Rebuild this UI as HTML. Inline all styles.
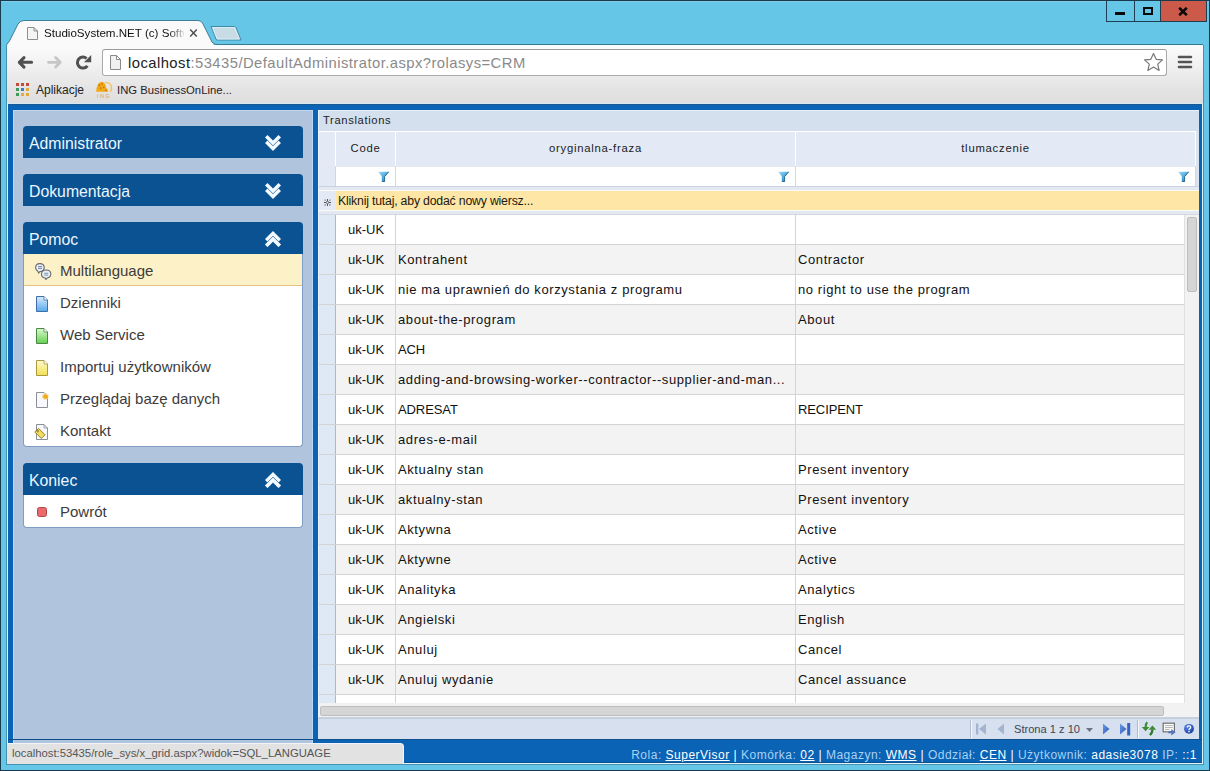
<!DOCTYPE html>
<html><head><meta charset="utf-8">
<style>
*{box-sizing:border-box;margin:0;padding:0}
html,body{width:1210px;height:771px;overflow:hidden;background:#66c6e8;font-family:"Liberation Sans",sans-serif}
.a{position:absolute}
#outline{left:0;top:0;width:1210px;height:771px;border:1px solid #173a4c;border-top-width:1px}
/* window buttons */
#wbtn{left:1106px;top:1px;width:101px;height:21px;border:1px solid #1e3f52;border-top:0;background:#66c6e8}
#wmin{left:0;top:0;width:28px;height:20px;border-right:1px solid #1e3f52}
#wmax{left:28px;top:0;width:26px;height:20px;border-right:1px solid #1e3f52}
#wcls{left:54px;top:0;width:45px;height:20px;background:#cb5a4a}
/* tabs */
#tabstripline{left:7px;top:44px;width:1196px;height:1px;background:#37798f}
#toolbar{left:7px;top:45px;width:1196px;height:59px;background:linear-gradient(#effcff 0,#fafafa 2px,#f1f1f1 20px,#e3e3e3 45px,#dedede 59px)}
#omni{left:102px;top:49px;width:1065px;height:27px;background:#fff;border:1px solid #a9a9a9;border-radius:3px;border-top-color:#9a9a9a}
#url{left:128px;top:53px;font-size:14.8px;letter-spacing:0.45px;line-height:20px;color:#8a8a8a;white-space:pre}
#url b{font-weight:normal;color:#222}
.bm{font-size:12px;color:#222;white-space:pre;line-height:14px}
#page{left:8px;top:104px;width:1194px;height:659px;background:#0a63b5}
#leftp{left:13px;top:110px;width:300px;height:640px;background:#b0c4de;border-left:1px solid #c4d8f2;border-top:1px solid #c0d6f0;border-right:1px solid #bcd6f6}
.hdr{position:absolute;left:23px;width:280px;height:32px;background:#0a5292;border-radius:4px 4px 0 0;color:#eaf7ff;font-size:15.8px;line-height:32px;padding-top:2px;padding-left:6px}
.hdr.c{}
.chev{position:absolute;left:241px;top:8px}
.plist{position:absolute;left:23px;width:280px;background:#fff;border:1px solid #7f9dc4;border-top:0;border-radius:0 0 4px 4px}
.item{position:relative;height:32px;font-size:15px;color:#3c3c3c;line-height:32px;padding-top:1px;padding-left:36px;white-space:pre}
.item.sel{background:#fdf1c8;border-bottom:1px solid #e6c27a;height:32px}
.ico{position:absolute;left:12px;top:8px}
#rightp{left:318px;top:110px;width:881px;height:629px;background:#dae3f0}
#ttl{left:318px;top:110px;width:881px;height:21px;background:#d5e0ef;border-top:1px solid #e8f0fb;border-left:1px solid #eef4fc;font-size:11.2px;letter-spacing:0.65px;color:#222;line-height:18px;padding-left:4px}
.hc{position:absolute;top:131px;height:35px;background:#e3eaf6;border-right:1px solid #fff;border-top:1px solid #fff;font-size:11.3px;letter-spacing:0.75px;color:#222;text-align:center;line-height:33px}
.fc{position:absolute;top:166px;height:20px;background:#fff;border-right:1px solid #d0d7e2;border-top:1px solid #e3e8f0}
.row{position:absolute;left:319px;width:865px;height:30px;border-bottom:1px solid #d4d4d4}
.row.g{background:#f3f3f3}
.row.w{background:#fff}
.ri{position:absolute;left:0;top:0;width:17px;height:29px;background:#dfe8f5;border-right:1px solid #a9b9cf}
.cc{position:absolute;left:17px;top:0;width:60px;height:29px;border-right:1px solid #d4d4d4;text-align:center;font-size:13px;letter-spacing:0px;padding-left:1px;color:#111;line-height:29px;white-space:pre}
.oc{position:absolute;left:77px;top:0;width:400px;height:29px;border-right:1px solid #d4d4d4;font-size:13px;letter-spacing:0.6px;color:#111;line-height:29px;padding-left:2px;white-space:pre}
.tc{position:absolute;left:477px;top:0;width:388px;height:29px;font-size:13px;letter-spacing:0.6px;color:#111;line-height:29px;padding-left:2px;white-space:pre}
#status{left:560px;top:747px;width:637px;text-align:right;font-size:12px;letter-spacing:0.5px;color:#a9d2f3;white-space:pre;line-height:16px}
#status u{color:#fff}
#bubble{left:7px;top:743px;width:397px;height:21px;background:#e2e2e2;border-top:1px solid #f0f4f8;border-right:1px solid #f0f4f8;border-radius:0 4px 0 0;font-size:11.3px;color:#555;line-height:19px;padding-left:5px;white-space:pre}
</style></head><body>
<div class="a" id="outline"></div>
<div class="a" style="left:1px;top:1px;width:1208px;height:1px;background:#84cce6"></div>

<!-- window buttons -->
<div class="a" id="wbtn">
 <div class="a" id="wmin"><div class="a" style="left:8px;top:11px;width:10px;height:3px;background:#0a0a0a"></div></div>
 <div class="a" id="wmax"><div class="a" style="left:8px;top:6px;width:10px;height:8px;border:2px solid #0a0a0a"></div></div>
 <div class="a" id="wcls"><svg class="a" style="left:17px;top:6px" width="10" height="9" viewBox="0 0 10 9"><path d="M1.2 0.8L8.8 8.2M8.8 0.8L1.2 8.2" stroke="#0a0a0a" stroke-width="2.6"/></svg></div>
</div>

<div class="a" id="tabstripline"></div>
<!-- new tab button -->
<svg class="a" style="left:208px;top:24px" width="40" height="20" viewBox="0 0 40 20"><path d="M3 2.5H26.5Q27.5 2.5 28 3.5L33 16H8.5Z" fill="#c8dce6" stroke="#3f8aa6" stroke-width="1"/><path d="M4.6 3.5H26.3L31.4 15H9.2Z" fill="none" stroke="#e0f2fa" stroke-width="0.8"/></svg>
<div class="a" id="toolbar"></div>
<!-- active tab -->
<svg class="a" style="left:0;top:18px" width="230" height="28" viewBox="0 0 230 28"><path d="M7 27.5 L7 26 Q9 24 10 22 L18 6 Q20 2.5 24 2.5 L198 2.5 Q201 2.5 202.5 5 L212 24 Q214 26.5 217 26.5" fill="#fafafa" stroke="#3d7f98" stroke-width="1"/><rect x="7.5" y="26" width="206" height="3" fill="#fafafa"/></svg>
<svg class="a" style="left:26px;top:26px" width="13" height="15" viewBox="0 0 13 15"><path d="M1.5 1.5H8L11.5 5V13.5H1.5Z" fill="#f4f4f4" stroke="#8e8e8e"/><path d="M8 1.5V5H11.5" fill="none" stroke="#8e8e8e"/></svg>
<div class="a" style="left:44px;top:26px;font-size:11.6px;color:#111;white-space:pre;line-height:14px;width:140px;overflow:hidden;-webkit-mask-image:linear-gradient(90deg,#000 124px,rgba(0,0,0,.25) 138px,transparent 142px)">StudioSystem.NET (c) Software</div>
<svg class="a" style="left:189px;top:28px" width="9" height="10" viewBox="0 0 9 10"><path d="M1.2 1.5L7.8 8.5M7.8 1.5L1.2 8.5" stroke="#505050" stroke-width="1.5"/></svg>

<!-- nav buttons -->
<svg class="a" style="left:17px;top:55px" width="17" height="15" viewBox="0 0 17 15"><path d="M7 2.6L2.3 7.35L7 12.1M2.6 7.35H14.6" fill="none" stroke="#505050" stroke-width="3" stroke-linecap="round" stroke-linejoin="round"/></svg>
<svg class="a" style="left:46px;top:55px" width="17" height="15" viewBox="0 0 17 15"><path d="M9.6 2.6L14.3 7.35L9.6 12.1M14 7.35H2.4" fill="none" stroke="#c6c6c6" stroke-width="2.8" stroke-linecap="round" stroke-linejoin="round"/></svg>
<svg class="a" style="left:75px;top:54px" width="17" height="17" viewBox="0 0 17 17"><path d="M12.4 11.8A5.5 5.5 0 1 1 11.6 4.5" fill="none" stroke="#505050" stroke-width="3"/><path d="M16.2 1V8.2H9Z" fill="#505050"/></svg>

<div class="a" id="omni"></div>
<svg class="a" style="left:109px;top:54px" width="13" height="17" viewBox="0 0 13 17"><path d="M1.5 1.5H7.5L11.5 5.5V15.5H1.5Z" fill="#f0f0f0" stroke="#8a8a8a"/><path d="M7.5 1.5V5.5H11.5Z" fill="#fff" stroke="#8a8a8a" stroke-linejoin="round"/></svg>
<div class="a" id="url"><b>localhost</b>:53435/DefaultAdministrator.aspx?rolasys=CRM</div>
<svg class="a" style="left:1143px;top:52px" width="21" height="20" viewBox="0 0 21 20"><path d="M10.5 1.5L13.2 7.3L19.5 7.9L14.7 12.1L16.1 18.4L10.5 15.1L4.9 18.4L6.3 12.1L1.5 7.9L7.8 7.3Z" fill="#fff" stroke="#777" stroke-width="1.2" stroke-linejoin="round"/></svg>
<svg class="a" style="left:1177px;top:54px" width="16" height="16" viewBox="0 0 16 16"><path d="M2 3H14M2 8H14M2 13H14" stroke="#555" stroke-width="2.6" stroke-linecap="round"/></svg>

<!-- bookmarks -->
<svg class="a" style="left:15px;top:82px" width="15" height="15" viewBox="0 0 15 15">
<rect x="1" y="1" width="3" height="3" fill="#c9483c"/><rect x="6" y="1" width="3" height="3" fill="#c9483c"/><rect x="11" y="1" width="3" height="3" fill="#c9483c"/>
<rect x="1" y="6" width="3" height="3" fill="#3c9a5a"/><rect x="6" y="6" width="3" height="3" fill="#3b7fc8"/><rect x="11" y="6" width="3" height="3" fill="#e2aa3c"/>
<rect x="1" y="11" width="3" height="3" fill="#3c9a5a"/><rect x="6" y="11" width="3" height="3" fill="#e2aa3c"/><rect x="11" y="11" width="3" height="3" fill="#e2aa3c"/></svg>
<div class="a bm" style="left:36px;top:83px">Aplikacje</div>
<svg class="a" style="left:95px;top:80px" width="18" height="18" viewBox="0 0 18 18"><path d="M1.2 11.8Q0.8 8 2.4 6Q3 3 5.6 2Q8.2 1.2 9.8 3.4Q11.2 5.2 10.8 7.4Q12.8 8.6 13.2 11.8Z" fill="#f3a818"/><path d="M10.2 2.4Q14.8 2.2 16.2 6Q17.2 9.6 15.2 11.8" fill="none" stroke="#f6c060" stroke-width="1.4"/><circle cx="4.2" cy="5.2" r="0.9" fill="#b87000"/><circle cx="7" cy="4" r="0.8" fill="#b87000"/><circle cx="5.6" cy="8.2" r="0.9" fill="#c47c00"/><circle cx="8.8" cy="7.4" r="0.8" fill="#c47c00"/><circle cx="11" cy="10.4" r="0.8" fill="#c47c00"/><text x="9" y="17.6" font-size="5.6" fill="#e0a050" text-anchor="middle" letter-spacing="1.3" font-family="Liberation Sans">ING</text></svg>
<div class="a bm" style="left:117px;top:83px;font-size:11.3px;color:#2a1a2a">ING BusinessOnLine...</div>

<!-- page -->
<div class="a" id="page"></div>
<div class="a" style="left:6px;top:45px;width:1px;height:720px;background:#4593b3"></div>
<div class="a" style="left:1203px;top:45px;width:1px;height:720px;background:#4593b3"></div>
<div class="a" style="left:6px;top:764px;width:1198px;height:1px;background:#4593b3"></div>
<div class="a" style="left:7px;top:103px;width:1196px;height:1px;background:#d6e6f0"></div>
<div class="a" style="left:8px;top:104px;width:1194px;height:1px;background:#1a5892"></div>
<div class="a" style="left:7px;top:103px;width:1px;height:661px;background:#dff3fb"></div>
<div class="a" style="left:1202px;top:103px;width:1px;height:661px;background:#dff3fb"></div>
<div class="a" style="left:7px;top:763px;width:1196px;height:1px;background:#dff3fb"></div>
<div class="a" id="leftp"></div>

<div class="hdr c" style="top:126px">Administrator<svg class="chev" width="18" height="18" viewBox="-1 -1 18 18"><path d="M0 2.5L2.5 0L8 5.5L13.5 0L16 2.5L8 10.5Z" fill="#f2faff"/><path d="M0 8L2.5 5.5L8 11L13.5 5.5L16 8L8 16Z" fill="#f2faff" stroke="#0a4a84" stroke-width="1"/><path d="M0 8L2.5 5.5L8 11L13.5 5.5L16 8L8 16Z" fill="#f2faff"/></svg></div>
<div class="hdr c" style="top:174px">Dokumentacja<svg class="chev" width="18" height="18" viewBox="-1 -1 18 18"><path d="M0 2.5L2.5 0L8 5.5L13.5 0L16 2.5L8 10.5Z" fill="#f2faff"/><path d="M0 8L2.5 5.5L8 11L13.5 5.5L16 8L8 16Z" fill="#f2faff" stroke="#0a4a84" stroke-width="1"/><path d="M0 8L2.5 5.5L8 11L13.5 5.5L16 8L8 16Z" fill="#f2faff"/></svg></div>
<div class="hdr" style="top:222px">Pomoc<svg class="chev" width="18" height="18" viewBox="-1 -1 18 18"><path d="M0 8L8 0L16 8L13.5 10.5L8 5L2.5 10.5Z" fill="#f2faff"/><path d="M0 13.5L8 5.5L16 13.5L13.5 16L8 10.5L2.5 16Z" fill="#f2faff" stroke="#0a4a84" stroke-width="1"/><path d="M0 13.5L8 5.5L16 13.5L13.5 16L8 10.5L2.5 16Z" fill="#f2faff"/></svg></div>
<div class="plist" style="top:254px;height:193px">
 <div class="item sel">Multilanguage<svg class="ico" style="left:11px;top:8px" width="17" height="18" viewBox="0 0 17 18"><path d="M3 9.5Q0.6 8 0.6 5.6Q0.6 1.6 4.8 1.6Q9.2 1.6 9.2 5.6Q9.2 9.4 5 9.6L3.6 11Z" fill="#e8eef8" stroke="#6a6a6a" stroke-width="1.1"/><path d="M3 4.6H7M3 6.4H7" stroke="#7a82a8" stroke-width="1"/><path d="M10.5 16.2Q6.5 15.8 6.5 12.3Q6.5 8 11.2 8Q15.8 8 15.8 12Q15.8 15.4 12.2 16L11 17.6Z" fill="#e8eef8" stroke="#6a6a6a" stroke-width="1.1"/><path d="M9.2 11.3H13.2M9.2 13.1H13.2" stroke="#7a9aa8" stroke-width="1"/></svg></div>
 <div class="item">Dzienniki<svg class="ico" style="left:12px;top:10px" width="13" height="17" viewBox="0 0 13 17"><defs><linearGradient id="gb" x1="0" y1="0" x2="0" y2="1"><stop offset="0" stop-color="#d8ecfc"/><stop offset="1" stop-color="#58a8ec"/></linearGradient></defs><path d="M0.5 0.5H8L11.5 4V15.5H0.5Z" fill="url(#gb)" stroke="#3d6fa8"/><path d="M8 0.5V4H11.5" fill="#fff" stroke="#3d6fa8" stroke-width="0.8"/></svg></div>
 <div class="item">Web Service<svg class="ico" style="left:12px;top:10px" width="13" height="17" viewBox="0 0 13 17"><defs><linearGradient id="gg" x1="0" y1="0" x2="0" y2="1"><stop offset="0" stop-color="#dcf8d0"/><stop offset="1" stop-color="#62d050"/></linearGradient></defs><path d="M0.5 0.5H8L11.5 4V15.5H0.5Z" fill="url(#gg)" stroke="#4a8a44"/><path d="M8 0.5V4H11.5" fill="#fff" stroke="#4a8a44" stroke-width="0.8"/></svg></div>
 <div class="item">Importuj użytkowników<svg class="ico" style="left:12px;top:10px" width="13" height="17" viewBox="0 0 13 17"><defs><linearGradient id="gy" x1="0" y1="0" x2="0" y2="1"><stop offset="0" stop-color="#fffad0"/><stop offset="1" stop-color="#f2e050"/></linearGradient></defs><path d="M0.5 0.5H8L11.5 4V15.5H0.5Z" fill="url(#gy)" stroke="#a89a40"/><path d="M8 0.5V4H11.5" fill="#fff" stroke="#a89a40" stroke-width="0.8"/></svg></div>
 <div class="item">Przeglądaj bazę danych<svg class="ico" style="left:12px;top:10px" width="14" height="17" viewBox="0 0 14 17"><path d="M0.5 0.5H8L11.5 4V15.5H0.5Z" fill="#f8f9fc" stroke="#8a8f9a"/><circle cx="9.3" cy="4.6" r="3.4" fill="#fbd27a" opacity="0.6"/><circle cx="9.3" cy="4.6" r="2.2" fill="#f2a620"/></svg></div>
 <div class="item">Kontakt<svg class="ico" style="left:10px;top:10px" width="16" height="17" viewBox="0 0 16 17"><path d="M2.5 0.5H10L13.5 4V15.5H2.5Z" fill="#f8f9fc" stroke="#8a8f9a"/><path d="M10 0.5V4H13.5" fill="none" stroke="#8a8f9a" stroke-width="0.8"/><path d="M0.8 8L4.5 4.3L11 10.8L7.3 14.5Z" fill="#f2dc60" stroke="#8c7a20" stroke-width="0.9"/><circle cx="3.6" cy="7" r="0.9" fill="none" stroke="#6a5a10" stroke-width="0.7"/></svg></div>
</div>
<div class="hdr" style="top:463px">Koniec<svg class="chev" width="18" height="18" viewBox="-1 -1 18 18"><path d="M0 8L8 0L16 8L13.5 10.5L8 5L2.5 10.5Z" fill="#f2faff"/><path d="M0 13.5L8 5.5L16 13.5L13.5 16L8 10.5L2.5 16Z" fill="#f2faff" stroke="#0a4a84" stroke-width="1"/><path d="M0 13.5L8 5.5L16 13.5L13.5 16L8 10.5L2.5 16Z" fill="#f2faff"/></svg></div>
<div class="plist" style="top:495px;height:33px">
 <div class="item">Powrót<svg class="ico" style="left:13px;top:12px" width="10" height="10" viewBox="0 0 10 10"><rect x="0.5" y="0.5" width="9" height="9" rx="2" fill="#e86a6a" stroke="#b04848"/></svg></div>
</div>

<!-- right panel -->
<div class="a" id="rightp"></div>
<div class="a" id="ttl">Translations</div>
<div class="a" style="left:318px;top:131px;width:1px;height:607px;background:#eef3fa"></div>
<div class="hc" style="left:319px;width:17px"></div>
<div class="hc" style="left:336px;width:60px">Code</div>
<div class="hc" style="left:396px;width:400px">oryginalna-fraza</div>
<div class="hc" style="left:796px;width:400px">tlumaczenie</div>
<div class="fc" style="left:319px;width:17px;background:#e3eaf6"></div>
<div class="fc" style="left:336px;width:60px"><svg class="a" style="left:42px;top:4px" width="12" height="11" viewBox="0 0 12 11"><defs><linearGradient id="fn1" x1="0" y1="0" x2="1" y2="1"><stop offset="0" stop-color="#a8dcf4"/><stop offset="0.6" stop-color="#3ea4d8"/><stop offset="1" stop-color="#1e6a96"/></linearGradient></defs><path d="M0.2 0.8H10.8L6.6 5.6V10.6H3.8V5.6Z" fill="url(#fn1)"/><path d="M10.8 0.8L6.6 5.6V10.6H3.8" fill="none" stroke="#1d5c82" stroke-width="0.9"/></svg></div>
<div class="fc" style="left:396px;width:400px"><svg class="a" style="left:382px;top:4px" width="12" height="11" viewBox="0 0 12 11"><defs><linearGradient id="fn2" x1="0" y1="0" x2="1" y2="1"><stop offset="0" stop-color="#a8dcf4"/><stop offset="0.6" stop-color="#3ea4d8"/><stop offset="1" stop-color="#1e6a96"/></linearGradient></defs><path d="M0.2 0.8H10.8L6.6 5.6V10.6H3.8V5.6Z" fill="url(#fn2)"/><path d="M10.8 0.8L6.6 5.6V10.6H3.8" fill="none" stroke="#1d5c82" stroke-width="0.9"/></svg></div>
<div class="fc" style="left:796px;width:400px"><svg class="a" style="left:382px;top:4px" width="12" height="11" viewBox="0 0 12 11"><defs><linearGradient id="fn3" x1="0" y1="0" x2="1" y2="1"><stop offset="0" stop-color="#a8dcf4"/><stop offset="0.6" stop-color="#3ea4d8"/><stop offset="1" stop-color="#1e6a96"/></linearGradient></defs><path d="M0.2 0.8H10.8L6.6 5.6V10.6H3.8V5.6Z" fill="url(#fn3)"/><path d="M10.8 0.8L6.6 5.6V10.6H3.8" fill="none" stroke="#1d5c82" stroke-width="0.9"/></svg></div>
<div class="a" style="left:319px;top:186px;width:880px;height:4px;background:#e4e9f1;border-top:1px solid #c9d2de"></div>
<div class="a" style="left:319px;top:190px;width:880px;height:21px;background:#fde6a6;border-top:1px solid #fbfbf6;border-bottom:1px solid #fbfbf6;font-size:12.3px;letter-spacing:-0.2px;color:#1e1a10;line-height:21px;padding-left:19px;white-space:pre">Kliknij tutaj, aby dodać nowy wiersz...</div>
<div class="a" style="left:319px;top:191px;width:17px;height:19px;background:#e3eaf6"><svg class="a" style="left:5px;top:8px" width="7" height="7" viewBox="0 0 7 7"><circle cx="3.5" cy="3.5" r="1.2" fill="none" stroke="#555" stroke-width="0.9"/><path d="M3.5 0V2M3.5 5V7M0 3.5H2M5 3.5H7" stroke="#555" stroke-width="1"/><circle cx="1.1" cy="1.1" r="0.65" fill="#444"/><circle cx="5.9" cy="1.1" r="0.65" fill="#444"/><circle cx="1.1" cy="5.9" r="0.65" fill="#444"/><circle cx="5.9" cy="5.9" r="0.65" fill="#444"/></svg></div>
<div class="a" style="left:319px;top:211px;width:880px;height:4px;background:#e4e9f1;border-bottom:1px solid #d0d8e4"></div>

<div id="rows">
<div class="row w" style="top:215px;height:30px;"><div class="ri"></div><div class="cc">uk-UK</div><div class="oc"></div><div class="tc"></div></div>
<div class="row g" style="top:245px;height:30px;"><div class="ri"></div><div class="cc">uk-UK</div><div class="oc">Kontrahent</div><div class="tc">Contractor</div></div>
<div class="row w" style="top:275px;height:30px;"><div class="ri"></div><div class="cc">uk-UK</div><div class="oc">nie ma uprawnień do korzystania z programu</div><div class="tc">no right to use the program</div></div>
<div class="row g" style="top:305px;height:30px;"><div class="ri"></div><div class="cc">uk-UK</div><div class="oc">about-the-program</div><div class="tc">About</div></div>
<div class="row w" style="top:335px;height:30px;"><div class="ri"></div><div class="cc">uk-UK</div><div class="oc" style="letter-spacing:-0.1px">ACH</div><div class="tc"></div></div>
<div class="row g" style="top:365px;height:30px;"><div class="ri"></div><div class="cc">uk-UK</div><div class="oc">adding-and-browsing-worker--contractor--supplier-and-man...</div><div class="tc"></div></div>
<div class="row w" style="top:395px;height:30px;"><div class="ri"></div><div class="cc">uk-UK</div><div class="oc" style="letter-spacing:-0.1px">ADRESAT</div><div class="tc" style="letter-spacing:-0.1px">RECIPENT</div></div>
<div class="row g" style="top:425px;height:30px;"><div class="ri"></div><div class="cc">uk-UK</div><div class="oc">adres-e-mail</div><div class="tc"></div></div>
<div class="row w" style="top:455px;height:30px;"><div class="ri"></div><div class="cc">uk-UK</div><div class="oc">Aktualny stan</div><div class="tc">Present inventory</div></div>
<div class="row g" style="top:485px;height:30px;"><div class="ri"></div><div class="cc">uk-UK</div><div class="oc">aktualny-stan</div><div class="tc">Present inventory</div></div>
<div class="row w" style="top:515px;height:30px;"><div class="ri"></div><div class="cc">uk-UK</div><div class="oc">Aktywna</div><div class="tc">Active</div></div>
<div class="row g" style="top:545px;height:30px;"><div class="ri"></div><div class="cc">uk-UK</div><div class="oc">Aktywne</div><div class="tc">Active</div></div>
<div class="row w" style="top:575px;height:30px;"><div class="ri"></div><div class="cc">uk-UK</div><div class="oc">Analityka</div><div class="tc">Analytics</div></div>
<div class="row g" style="top:605px;height:30px;"><div class="ri"></div><div class="cc">uk-UK</div><div class="oc">Angielski</div><div class="tc">English</div></div>
<div class="row w" style="top:635px;height:30px;"><div class="ri"></div><div class="cc">uk-UK</div><div class="oc">Anuluj</div><div class="tc">Cancel</div></div>
<div class="row g" style="top:665px;height:30px;"><div class="ri"></div><div class="cc">uk-UK</div><div class="oc">Anuluj wydanie</div><div class="tc">Cancel assuance</div></div>
<div class="row w" style="top:695px;height:8px;border-bottom:0;"><div class="ri"></div><div class="cc"></div><div class="oc"></div><div class="tc"></div></div>
</div>

<!-- vertical scrollbar -->
<div class="a" style="left:1184px;top:215px;width:15px;height:488px;background:#f2f2f2;border-left:1px solid #e0e0e0"></div>
<div class="a" style="left:1187px;top:217px;width:10px;height:75px;background:#d5d5d5;border:1px solid #bdbdbd;border-radius:2px"></div>
<!-- horizontal scrollbar -->
<div class="a" style="left:319px;top:703px;width:880px;height:15px;background:#f2f2f2;border-bottom:1px solid #c8d0dc"></div>
<div class="a" style="left:320px;top:706px;width:844px;height:10px;background:#d5d5d5;border:1px solid #bdbdbd;border-radius:2px"></div>

<!-- pager -->
<div class="a" style="left:318px;top:718px;width:881px;height:21px;background:#d7e0ee;border-top:1px solid #c3cedd"></div>
<div class="a" style="left:970px;top:720px;width:2px;height:18px;border-left:1px solid #aebbd0;border-right:1px solid #f4f8fd"></div>
<svg class="a" style="left:975px;top:722px" width="12" height="13" viewBox="0 0 12 13"><rect x="1" y="1.5" width="2.3" height="11" fill="#a4b4d0"/><path d="M11 1.5V12.5L4 7Z" fill="#a4b4d0"/></svg>
<svg class="a" style="left:996px;top:722px" width="9" height="13" viewBox="0 0 9 13"><path d="M8 1.5V12.5L1.5 7Z" fill="#a4b4d0"/></svg>
<div class="a" style="left:1014px;top:722px;font-size:11.1px;line-height:14px;color:#3b4656;white-space:pre">Strona 1 z 10</div>
<svg class="a" style="left:1085px;top:727px" width="9" height="6" viewBox="0 0 9 6"><path d="M1 1H8L4.5 5Z" fill="#6a7482"/></svg>
<svg class="a" style="left:1102px;top:722px" width="9" height="13" viewBox="0 0 9 13"><defs><linearGradient id="pb" x1="0" y1="0" x2="1" y2="1"><stop offset="0" stop-color="#6a9ae6"/><stop offset="1" stop-color="#2a58b8"/></linearGradient></defs><path d="M1 1.5V12.5L7.5 7Z" fill="url(#pb)"/></svg>
<svg class="a" style="left:1119px;top:722px" width="13" height="14" viewBox="0 0 13 14"><path d="M1 1.5V12.5L7.5 7Z" fill="url(#pb)"/><rect x="8.2" y="1" width="3" height="12.5" fill="#3462c0"/></svg>
<div class="a" style="left:1137px;top:720px;width:2px;height:18px;border-left:1px solid #aebbd0;border-right:1px solid #f4f8fd"></div>
<svg class="a" style="left:1141px;top:721px" width="16" height="15" viewBox="0 0 16 15"><path d="M6.2 1.2Q4.6 3 4.6 6.2" fill="none" stroke="#3e8a34" stroke-width="2.2"/><path d="M0.8 6H8.4L4.6 10.2Z" fill="#3e8a34"/><path d="M11.4 8.4Q11.4 12 8.8 14" fill="none" stroke="#2f7a28" stroke-width="2.2"/><path d="M7.6 8.8H15.2L11.4 4.6Z" fill="#3e8a34"/></svg>
<svg class="a" style="left:1162px;top:722px" width="15" height="14" viewBox="0 0 15 14"><rect x="1.2" y="1.2" width="11.2" height="8.6" fill="#fff" stroke="#6e6e6e" stroke-width="1.2"/><path d="M3 3.6H10.8M3 5.6H10.8M3 7.6H7.5" stroke="#a8a8a8" stroke-width="0.9"/><path d="M6.3 9.2H9.3V7L13.6 10.2L9.3 13.4V11.2H6.3Z" fill="#5673bd"/></svg>
<svg class="a" style="left:1183px;top:723px" width="12" height="12" viewBox="0 0 12 12"><defs><radialGradient id="hg" cx="0.35" cy="0.3" r="0.8"><stop offset="0" stop-color="#5a86e8"/><stop offset="1" stop-color="#1a3a9c"/></radialGradient></defs><circle cx="6" cy="5.8" r="4.9" fill="url(#hg)"/><path d="M4.3 4.4Q4.3 2.8 6 2.8Q7.7 2.8 7.7 4.3Q7.7 5.2 6.7 5.7Q6 6.1 6 7" fill="none" stroke="#fff" stroke-width="1.3"/><rect x="5.3" y="7.8" width="1.4" height="1.4" fill="#fff"/></svg>

<div class="a" style="left:8px;top:739px;width:1194px;height:1px;background:#0c4f8c"></div>
<div class="a" style="left:8px;top:762px;width:1194px;height:1px;background:#0c528e"></div>
<div class="a" id="status">Rola: <u>SuperVisor</u> <span style="color:#fff">|</span> Komórka: <u>02</u> <span style="color:#fff">|</span> Magazyn: <u>WMS</u> <span style="color:#fff">|</span> Oddział: <u>CEN</u> <span style="color:#fff">|</span> Użytkownik: <span style="color:#fff">adasie3078</span> IP: <span style="color:#fff">::1</span></div>

<div class="a" id="bubble">localhost:53435/role_sys/x_grid.aspx?widok=SQL_LANGUAGE</div>

</body></html>
